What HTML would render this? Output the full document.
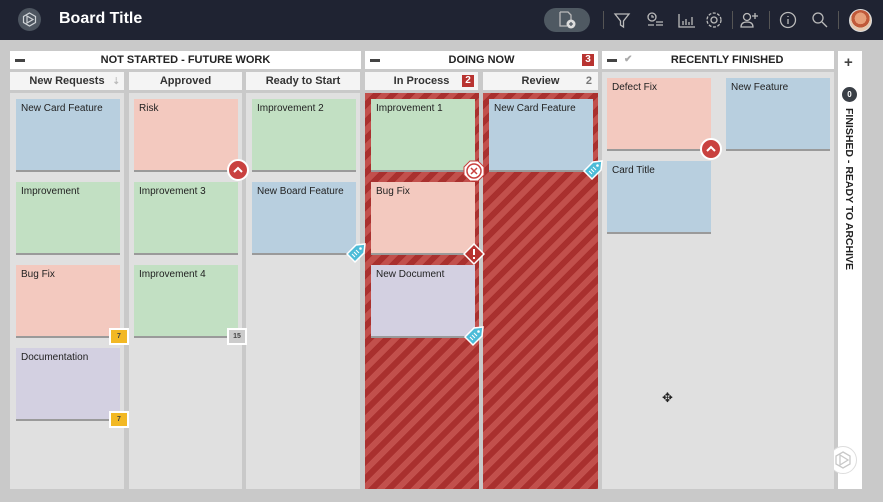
<!DOCTYPE html>
<html><head><style>
*{box-sizing:border-box;margin:0;padding:0}
body{width:883px;height:502px;overflow:hidden;background:#c9c9c9;font-family:"Liberation Sans",sans-serif;position:relative}
.a{position:absolute}
.top{left:0;top:0;width:883px;height:40px;background:#1f2332}
.hd{background:#fff;height:18px;font-size:11px;font-weight:bold;color:#222;text-align:center;line-height:18px}
.sh{background:#f4f4f4;height:18px;font-size:11px;font-weight:bold;color:#333;text-align:center;line-height:18px}
.col{background:#e0e0e0}
.red{background:repeating-linear-gradient(135deg,#c2504c 0 6px,#a9302e 6px 12px)}
.c{position:absolute;width:104px;height:71px;font-size:10px;color:#222;padding:4px 5px;box-shadow:0 2px 0 #9a9a9a}
.p{background:#f3c9bf}.b{background:#b8cfdf}.g{background:#c2e0c3}.l{background:#d3d0e1}
.minus{position:absolute;left:5px;top:8px;width:10px;height:3px;background:#444}
.cal{position:absolute;width:20px;height:17px;background:#f2b824;border:2px solid #fff;font-size:7px;color:#444;text-align:center;line-height:13px;font-weight:bold}
.ic{stroke:#bbb;fill:none;stroke-width:1.3}
</style></head><body>
<div class="a top"></div>
<div class="a" style="left:18px;top:8px;width:23px;height:23px;border-radius:50%;background:#4d5560"></div>
<svg class="a" style="left:18px;top:8px" width="23" height="23"><path d="M11.5 5l6 3.5v6l-6 3.5-6-3.5v-6z M9 8v7l6-3.5z" stroke="#d0d4d8" fill="none" stroke-width="1.2"/></svg>
<div class="a" style="left:59px;top:10px;color:#fff;font-size:16px;font-weight:bold">Board Title</div>
<div class="a" style="left:544px;top:8px;width:46px;height:24px;border-radius:12px;background:#4f5962"></div>
<svg class="a" style="left:556px;top:10px" width="22" height="20"><path d="M4 2h8l3 3v6M4 2v14h7" class="ic" stroke="#ddd"/><circle cx="15" cy="14" r="4.5" fill="#ddd"/><path d="M15 12v4M13 14h4" stroke="#4f5962" stroke-width="1.3"/></svg>
<div class="a" style="left:603px;top:11px;width:1px;height:18px;background:#555"></div>
<svg class="a" style="left:612px;top:10px" width="20" height="20"><path d="M3 4h14l-5.5 7v6l-3-2v-4z" class="ic"/></svg>
<svg class="a" style="left:645px;top:10px" width="20" height="20"><circle cx="7" cy="7" r="4" class="ic"/><path d="M7 5v2h2M11 12h7M11 15h7M3 15h6" class="ic"/></svg>
<svg class="a" style="left:677px;top:10px" width="20" height="20"><path d="M2 4v13h16M6 15v-4M9 15v-6M12 15v-3M15 15v-8" class="ic"/></svg>
<svg class="a" style="left:704px;top:10px" width="20" height="20"><circle cx="10" cy="10" r="3" class="ic"/><circle cx="10" cy="10" r="7" class="ic" stroke-dasharray="3 1.5"/></svg>
<div class="a" style="left:732px;top:11px;width:1px;height:18px;background:#555"></div>
<svg class="a" style="left:739px;top:10px" width="22" height="20"><circle cx="8" cy="7" r="3.5" class="ic"/><path d="M2 17c0-4 3-5 6-5s6 1 6 5zM16 3v6M13 6h6" class="ic"/></svg>
<div class="a" style="left:769px;top:11px;width:1px;height:18px;background:#555"></div>
<svg class="a" style="left:778px;top:10px" width="20" height="20"><circle cx="10" cy="10" r="7.5" class="ic"/><path d="M10 9v5M10 6v1" class="ic"/></svg>
<svg class="a" style="left:810px;top:10px" width="20" height="20"><circle cx="8" cy="8" r="5" class="ic"/><path d="M12 12l5 5" class="ic"/></svg>
<div class="a" style="left:838px;top:11px;width:1px;height:18px;background:#555"></div>
<div class="a" style="left:849px;top:9px;width:23px;height:23px;border-radius:50%;background:radial-gradient(circle at 50% 40%,#e7a07a 0 35%,#c05a3a 36% 55%,#e5c9b0 56%);border:1.5px solid #ddd"></div>

<div class="a hd" style="left:10px;top:51px;width:351px">NOT STARTED - FUTURE WORK<div class="minus"></div></div>
<div class="a hd" style="left:365px;top:51px;width:233px">DOING NOW<div class="minus"></div><div class="a" style="right:4px;top:3px;width:12px;height:12px;background:#b83330;color:#fff;font-size:10px;line-height:12px">3</div></div>
<div class="a hd" style="left:602px;top:51px;width:232px">&nbsp;&nbsp;&nbsp;&nbsp;&nbsp;&nbsp;RECENTLY FINISHED<div class="minus"></div><span class="a" style="left:22px;top:0;color:#aaa;font-size:10px">✔</span></div>
<div class="a" style="left:838px;top:51px;width:24px;height:438px;background:#fff"></div>
<div class="a" style="left:844px;top:54px;font-size:15px;font-weight:bold;color:#444">+</div>
<div class="a" style="left:842px;top:87px;width:15px;height:15px;border-radius:50%;background:#3a3f46;color:#fff;font-size:8px;text-align:center;line-height:15px;font-weight:bold">0</div>
<div class="a" style="left:843px;top:108px;writing-mode:vertical-rl;font-size:10.5px;font-weight:bold;color:#222">FINISHED - READY TO ARCHIVE</div>
<div class="a" style="left:829px;top:446px;width:28px;height:28px;border-radius:50%;background:#fff;border:1px solid #ddd"></div>
<svg class="a" style="left:829px;top:446px" width="28" height="28"><path d="M14 6l7 4v8l-7 4-7-4v-8z M11 9v10l8-5z" stroke="#c8c8c8" fill="none" stroke-width="1.3"/></svg>

<div class="a sh" style="left:10px;top:72px;width:114px">New Requests<span class="a" style="right:4px;top:0;color:#bbb;font-size:9px">⇣</span></div>
<div class="a sh" style="left:129px;top:72px;width:113px">Approved</div>
<div class="a sh" style="left:246px;top:72px;width:114px">Ready to Start</div>
<div class="a sh" style="left:365px;top:72px;width:113px">In Process<div class="a" style="right:4px;top:3px;width:12px;height:12px;background:#b83330;color:#fff;font-size:10px;line-height:12px">2</div></div>
<div class="a sh" style="left:483px;top:72px;width:115px">Review<span class="a" style="right:6px;top:0;color:#777">2</span></div>

<div class="a col" style="left:10px;top:93px;width:114px;height:396px"></div>
<div class="a col" style="left:129px;top:93px;width:113px;height:396px"></div>
<div class="a col" style="left:246px;top:93px;width:114px;height:396px"></div>
<div class="a red" style="left:365px;top:93px;width:114px;height:396px"></div>
<div class="a red" style="left:483px;top:93px;width:115px;height:396px"></div>
<div class="a col" style="left:602px;top:72px;width:232px;height:417px"></div>

<div class="c b" style="left:16px;top:99px">New Card Feature</div>
<div class="c g" style="left:16px;top:182px">Improvement</div>
<div class="c p" style="left:16px;top:265px">Bug Fix</div>
<div class="c l" style="left:16px;top:348px">Documentation</div>
<div class="c p" style="left:134px;top:99px">Risk</div>
<div class="c g" style="left:134px;top:182px">Improvement 3</div>
<div class="c g" style="left:134px;top:265px">Improvement 4</div>
<div class="c g" style="left:252px;top:99px">Improvement 2</div>
<div class="c b" style="left:252px;top:182px">New Board Feature</div>
<div class="c g" style="left:371px;top:99px">Improvement 1</div>
<div class="c p" style="left:371px;top:182px">Bug Fix</div>
<div class="c l" style="left:371px;top:265px">New Document</div>
<div class="c b" style="left:489px;top:99px">New Card Feature</div>
<div class="c p" style="left:607px;top:78px">Defect Fix</div>
<div class="c b" style="left:607px;top:161px">Card Title</div>
<div class="c b" style="left:726px;top:78px">New Feature</div>

<!-- up chevron badges -->
<svg class="a" style="left:227px;top:159px" width="22" height="22"><circle cx="11" cy="11" r="10" fill="#c9413f" stroke="#fff" stroke-width="2"/><path d="M7 13l4-4 4 4" stroke="#fff" stroke-width="2" fill="none"/></svg>
<svg class="a" style="left:700px;top:138px" width="22" height="22"><circle cx="11" cy="11" r="10" fill="#c9413f" stroke="#fff" stroke-width="2"/><path d="M7 13l4-4 4 4" stroke="#fff" stroke-width="2" fill="none"/></svg>
<!-- stop badge -->
<svg class="a" style="left:463px;top:160px" width="22" height="22"><path d="M7 1h8l6 6v8l-6 6h-8l-6-6v-8z" fill="#fff" stroke="#c9413f" stroke-width="1"/><circle cx="11" cy="11" r="7" fill="none" stroke="#c9413f" stroke-width="1.5"/><path d="M8 8l6 6M14 8l-6 6" stroke="#c9413f" stroke-width="1.5"/></svg>
<!-- warning diamond -->
<svg class="a" style="left:463px;top:243px" width="22" height="22"><path d="M11 1l10 10-10 10-10-10z" fill="#b83330" stroke="#fff" stroke-width="1.5"/><path d="M11 6v6M11 14v2" stroke="#fff" stroke-width="2"/></svg>
<div class="cal" style="left:109px;top:328px">7</div>
<div class="cal" style="left:109px;top:411px">7</div>
<div class="cal" style="left:227px;top:328px;background:#ccc">15</div>
<!-- tags -->
<svg class="a" style="left:345px;top:242px" width="22" height="22"><path d="M20 2l-1 9-9 9-8-8 9-9z" fill="#4dbcd8" stroke="#fff" stroke-width="1.5"/><circle cx="15.5" cy="6.5" r="1.3" fill="#fff"/><path d="M7 12l3 3M9 10l3 3M11 8l3 3" stroke="#fff" stroke-width="1"/></svg>
<svg class="a" style="left:463px;top:325px" width="22" height="22"><path d="M20 2l-1 9-9 9-8-8 9-9z" fill="#4dbcd8" stroke="#fff" stroke-width="1.5"/><circle cx="15.5" cy="6.5" r="1.3" fill="#fff"/><path d="M7 12l3 3M9 10l3 3M11 8l3 3" stroke="#fff" stroke-width="1"/></svg>
<svg class="a" style="left:582px;top:159px" width="22" height="22"><path d="M20 2l-1 9-9 9-8-8 9-9z" fill="#4dbcd8" stroke="#fff" stroke-width="1.5"/><circle cx="15.5" cy="6.5" r="1.3" fill="#fff"/><path d="M7 12l3 3M9 10l3 3M11 8l3 3" stroke="#fff" stroke-width="1"/></svg>
<div class="a" style="left:662px;top:390px;font-size:13px;color:#222">✥</div>
</body></html>
